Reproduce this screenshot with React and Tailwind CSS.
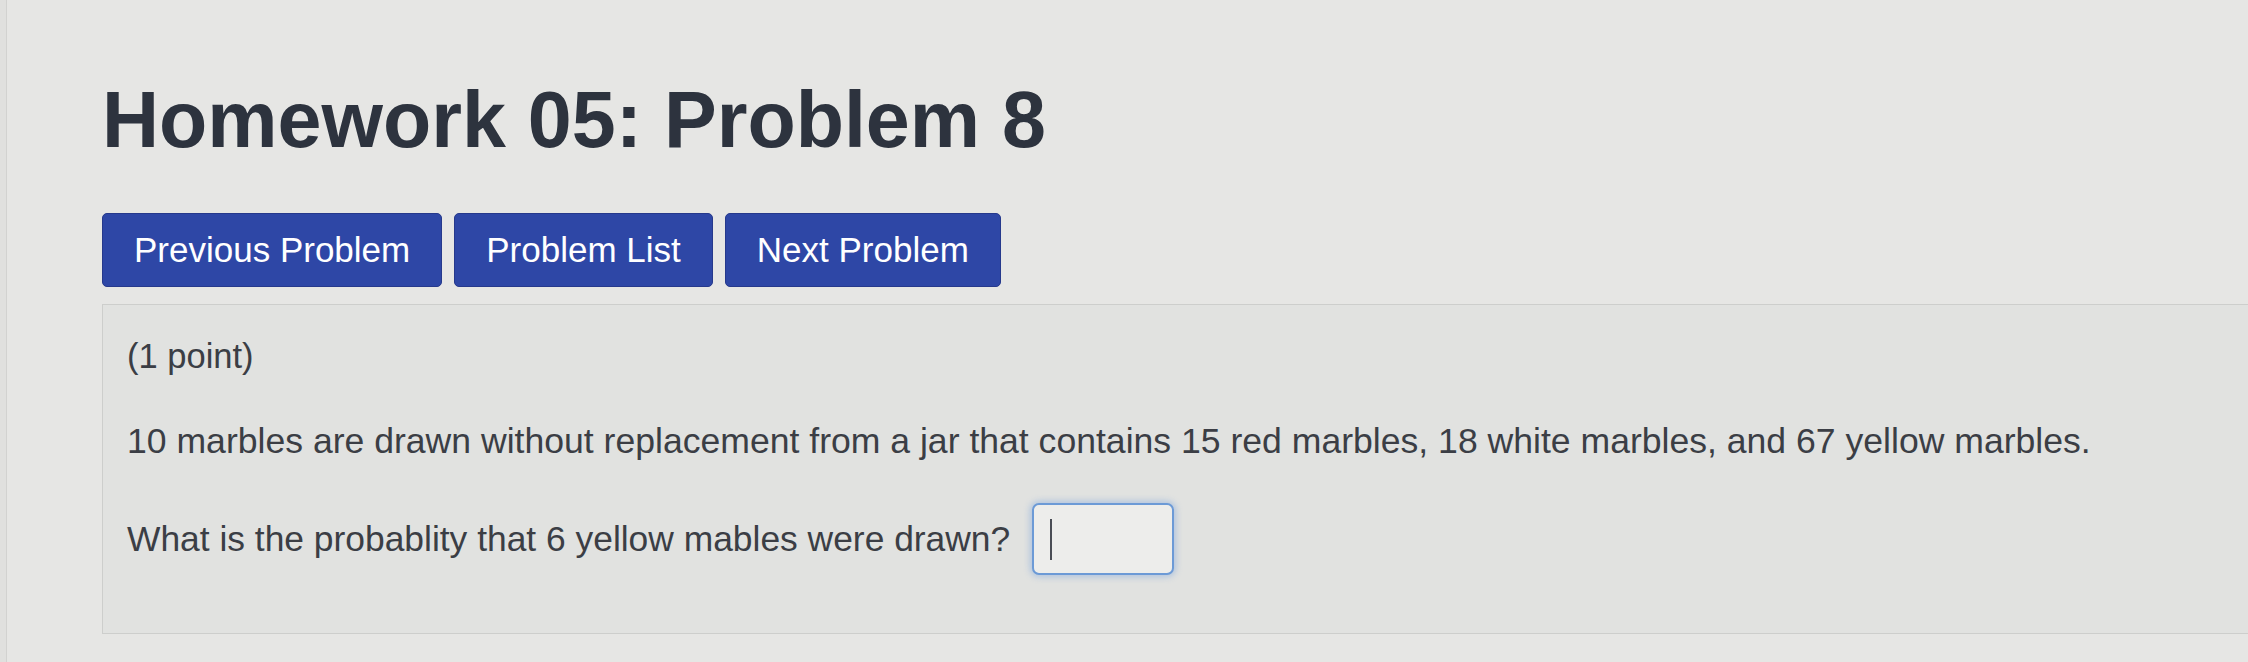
const BUTTONS = ['Previous Problem', 'Problem List', 'Next Problem']

export default function App() {
  return (
    <div className="flex h-[662px] w-full overflow-hidden bg-[#e6e6e4] font-['Liberation_Sans',Arial,sans-serif]">
      <div className="w-[7px] shrink-0 border-r border-[#d2d2d0] bg-[#e0e0de]" />

      <main className="flex min-w-0 flex-1 flex-col pl-[95px] pt-[80px]">
        <h1 className="text-[79px] font-bold leading-[80px] text-[#2d333e]">Homework 05: Problem 8</h1>

        <div className="mt-[53px] flex gap-[12px]">
          {BUTTONS.map((label) => (
            <button
              key={label}
              type="button"
              className="flex h-[74px] items-center rounded-[5px] border border-[#26398c] bg-[#2e47a6] px-[31px] text-[35px] leading-[72px] text-white"
            >
              {label}
            </button>
          ))}
        </div>

        <section className="mt-[17px] h-[330px] border border-r-0 border-[#cdcecc] bg-[#e1e2e0] pl-[24px] pt-[31px] text-[35.6px] leading-[40px] text-[#3b3e45]">
          <p className="text-[34.5px]">(1 point)</p>
          <p className="mt-[45px] whitespace-nowrap">
            10 marbles are drawn without replacement from a jar that contains 15 red marbles, 18 white marbles, and 67
            yellow marbles.
          </p>
          <div className="mt-[42px] flex items-center gap-[22px]">
            <span className="text-[35.4px]">What is the probablity that 6 yellow mables were drawn?</span>
            <div className="flex h-[72px] w-[142px] items-center rounded-[7px] border-2 border-[#6c9ad6] bg-[#ededeb] pl-[16px] shadow-[0_0_6px_2px_rgba(100,150,220,0.4)]">
              <span className="h-[41px] w-[2px] bg-[#4a4d55]" />
            </div>
          </div>
        </section>
      </main>
    </div>
  )
}
